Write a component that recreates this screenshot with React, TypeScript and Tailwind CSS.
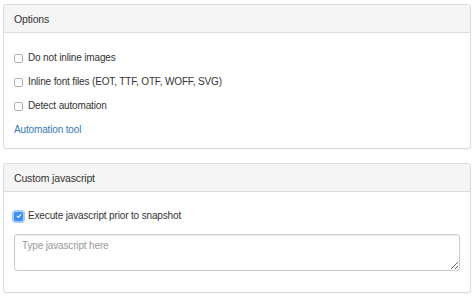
import React from "react";

function Box({ checked }: { checked?: boolean }) {
  if (checked) {
    return (
      <span className="flex h-[9px] w-[9px] items-center justify-center rounded-[2px] bg-[#3b8ff0] shadow-[0_0_0_2px_rgba(80,150,240,0.5)]">
        <svg width="6" height="6" viewBox="0 0 8 8">
          <path d="M1.5 4.2 L3.2 5.8 L6.5 2" stroke="#fff" strokeWidth="1.5" fill="none" strokeLinecap="round" strokeLinejoin="round" />
        </svg>
      </span>
    );
  }
  return <span className="block h-[9px] w-[9px] rounded-[2px] border border-[#b3b3b3] bg-white" />;
}

function Row({ label, checked }: { label: string; checked?: boolean }) {
  return (
    <div className="flex h-[24px] items-center gap-[5px]">
      <Box checked={checked} />
      <span>{label}</span>
    </div>
  );
}

export default function App() {
  return (
    <div
      className="w-[474px] h-[297px] bg-white pt-[4px] px-[3px] text-[10px] leading-[12px] tracking-[-0.15px] text-[#333]"
      style={{ fontFamily: '"Liberation Sans", Arial, sans-serif' }}
    >
      <div className="rounded-[3px] border border-[#dcdcdc] bg-white shadow-[0_1px_1px_rgba(0,0,0,0.05)]">
        <div className="flex h-[28px] items-center border-b border-[#dcdcdc] bg-[#f5f5f5] px-[10px] rounded-t-[3px] text-[10.5px]">
          Options
        </div>
        <div className="px-[10px] pt-[13px] pb-[6px]">
          <Row label="Do not inline images" />
          <Row label="Inline font files (EOT, TTF, OTF, WOFF, SVG)" />
          <Row label="Detect automation" />
          <div className="flex h-[24px] items-center text-[#337ab7]">Automation tool</div>
        </div>
      </div>

      <div className="mt-[14px] rounded-[3px] border border-[#dcdcdc] bg-white shadow-[0_1px_1px_rgba(0,0,0,0.05)]">
        <div className="flex h-[28px] items-center border-b border-[#dcdcdc] bg-[#f5f5f5] px-[10px] rounded-t-[3px] text-[10.5px]">
          Custom javascript
        </div>
        <div className="px-[10px] pt-[12px] pb-[21px]">
          <Row label="Execute javascript prior to snapshot" checked />
          <textarea
            className="mt-[6px] block h-[37px] w-full resize-y rounded-[3px] border border-[#ccc] px-[7px] py-[5px] text-[10px] leading-[12px] tracking-[-0.15px] text-[#333] placeholder:text-[#999] outline-none shadow-[inset_0_1px_1px_rgba(0,0,0,0.075)]"
            style={{ fontFamily: '"Liberation Sans", Arial, sans-serif' }}
            placeholder="Type javascript here"
          />
        </div>
      </div>
    </div>
  );
}
